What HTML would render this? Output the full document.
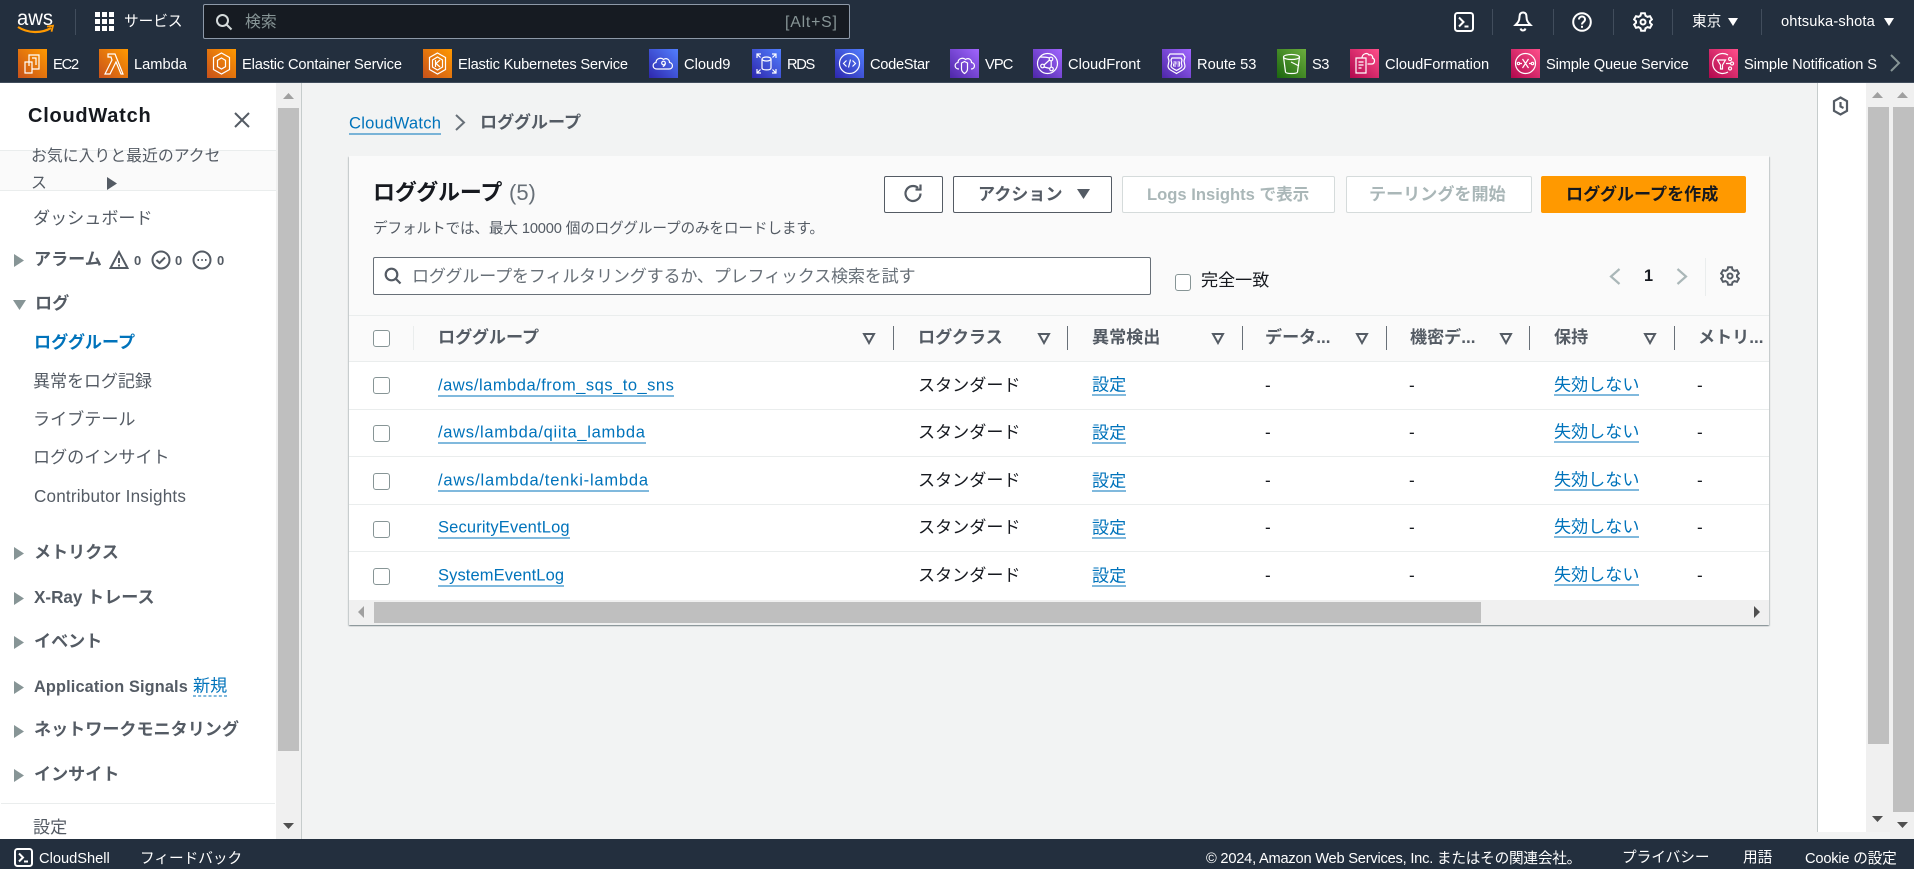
<!DOCTYPE html>
<html lang="ja"><head><meta charset="utf-8"><title>CloudWatch ロググループ</title>
<style>
html,body{margin:0;padding:0;width:1914px;height:869px;overflow:hidden;background:#f2f3f3}
body{position:relative;font-family:"Liberation Sans","Noto Sans CJK JP",sans-serif;color:#16191f;font-size:17.09px}
.a{position:absolute}
.t{position:absolute;white-space:nowrap;transform:translateY(calc(-50% + 1px));line-height:22px}
.w{color:#fff}
.n{font-size:14.65px;color:#fff}
.ic{position:absolute;top:49px;width:29px;height:29px}
.ic svg{display:block;width:29px;height:29px;fill:none;stroke:#fff;stroke-width:1.2}
.or{background:linear-gradient(45deg,#c8511b,#f90)}
.bl{background:linear-gradient(45deg,#2e27ad,#527fff)}
.pu{background:linear-gradient(45deg,#4d27a8,#a166ff)}
.gr{background:linear-gradient(45deg,#1b660f,#6cae3e)}
.pk{background:linear-gradient(45deg,#b0084d,#ff4f8b)}
.dv{position:absolute;width:1px;background:#414d5c}
.g{color:#545b64}
.b{font-weight:700}
.tr{position:absolute;background:#879596;width:10px;height:13px;clip-path:polygon(0 0,100% 50%,0 100%)}
.td{position:absolute;background:#879596;width:13px;height:10px;clip-path:polygon(0 0,100% 0,50% 100%)}
.up{position:absolute;background:#a0a0a0;width:11px;height:6px;clip-path:polygon(50% 0,100% 100%,0 100%)}
.dn{position:absolute;background:#505050;width:11px;height:6px;clip-path:polygon(0 0,100% 0,50% 100%)}
.thumb{position:absolute;background:#bfbfbf}
.btn{position:absolute;top:176px;height:37px;box-sizing:border-box;border:1px solid #545b64;border-radius:2px;background:#fff}
.dis{border-color:#d5dbdb}
.cb{position:absolute;left:373px;width:17px;height:17px;box-sizing:border-box;border:1.2px solid #879596;border-radius:3px;background:#fff}
.l{color:#0073bb;border-bottom:1px solid #0073bb;line-height:20px}
.j{padding-top:2px;line-height:18px}
.hl{position:absolute;left:349px;width:1420px;height:1px;background:#eaeded}
.vd{position:absolute;top:326px;height:24px;width:1px;background:#687078}
.s{position:absolute;top:332px;width:14px;height:13px;fill:none;stroke:#545b64;stroke-width:2}
.h{color:#545b64;font-weight:700;top:337px}
.ic2{position:absolute;fill:none;stroke:#fff;stroke-width:2}
</style></head><body>

<!-- top header -->
<div class="a" style="left:0;top:0;width:1914px;height:82px;background:#232f3e"></div>
<div class="a" style="left:0;top:82px;width:1914px;height:1px;background:#414d5c"></div>
<svg class="a" style="left:16px;top:8px" width="40" height="27" viewBox="0 0 40 27">
<text x="1" y="17" font-family="Liberation Sans" font-size="21" fill="#fff" textLength="36" lengthAdjust="spacingAndGlyphs">aws</text>
<path d="M2 19c10 6.500 24 6.500 33 1" fill="none" stroke="#f90" stroke-width="2.200"/><path d="M31 18.500l6-.8-1.500 6" fill="none" stroke="#f90" stroke-width="1.800"/></svg>
<div class="dv" style="left:75px;top:9px;height:26px"></div>
<svg class="a" style="left:95px;top:12px" width="20" height="20" viewBox="0 0 20 20" fill="#fff"><rect x="0" y="0" width="5" height="5"/><rect x="7" y="0" width="5" height="5"/><rect x="14" y="0" width="5" height="5"/><rect x="0" y="7" width="5" height="5"/><rect x="7" y="7" width="5" height="5"/><rect x="14" y="7" width="5" height="5"/><rect x="0" y="14" width="5" height="5"/><rect x="7" y="14" width="5" height="5"/><rect x="14" y="14" width="5" height="5"/></svg>
<span class="t n" style="left:124px;top:21px">サービス</span>
<div class="a" style="left:203px;top:4px;width:647px;height:35px;box-sizing:border-box;background:#161b22;border:1px solid #8d99a8;border-radius:2px"></div>
<svg class="a" style="left:215px;top:13px" width="18" height="18" viewBox="0 0 18 18" fill="none" stroke="#d5dbdb" stroke-width="2"><circle cx="7.500" cy="7.500" r="5.500"/><path d="M11.500 11.500L16.500 16.500"/></svg>
<span class="t" style="left:245px;top:22px;font-size:15.870px;color:#879596">検索</span>
<span class="t" style="left:785px;top:22px;font-size:15.870px;letter-spacing:.8px;color:#879596">[Alt+S]</span>

<svg class="ic2" style="left:1454px;top:12px" width="20" height="20" viewBox="0 0 20 20"><rect x="1" y="1" width="18" height="18" rx="2.500"/><path d="M5 5.500l4.500 4.500L5 14.500M10.500 14.500h4"/></svg>
<div class="dv" style="left:1492px;top:9px;height:26px"></div>
<svg class="ic2" style="left:1513px;top:11px" width="20" height="21" viewBox="0 0 20 21"><path d="M10 1.500c-2.500 0-3.500 2-3.500 4.500 0 4-2 6-4 8h15c-2-2-4-4-4-8 0-2.500-1-4.500-3.500-4.500zM7.500 17.500c.5 1.500 1.500 2 2.500 2s2-.5 2.500-2"/></svg>
<div class="dv" style="left:1553px;top:9px;height:26px"></div>
<svg class="ic2" style="left:1572px;top:12px" width="20" height="20" viewBox="0 0 20 20"><circle cx="10" cy="10" r="8.800"/><path d="M7 7.500c0-2 1.500-3 3-3s3 1 3 3c0 2.500-3 2.500-3 5"/><path d="M10 13.800v2" /></svg>
<div class="dv" style="left:1613px;top:9px;height:26px"></div>
<svg class="a" style="left:1633px;top:12px" width="20" height="20" viewBox="0 0 16 16" fill="none" stroke="#fff" stroke-width="1.600"><path d="M6.500 1h3l.5 2 1.600.9 2-.6 1.500 2.600-1.500 1.400v1.400l1.500 1.400-1.500 2.600-2-.6-1.600.9-.5 2h-3l-.5-2-1.600-.9-2 .6-1.500-2.600 1.500-1.400V7.300L.9 5.900l1.500-2.600 2 .6L6 3z"/><circle cx="8" cy="8" r="2"/></svg>
<div class="dv" style="left:1672px;top:9px;height:26px"></div>
<span class="t n" style="left:1692px;top:21px">東京</span>
<div class="a" style="left:1728px;top:18px;width:10px;height:8px;background:#fff;clip-path:polygon(0 0,100% 0,50% 100%)"></div>
<div class="dv" style="left:1761px;top:9px;height:26px"></div>
<span class="t n" style="left:1781px;top:21px;letter-spacing:.15px">ohtsuka-shota</span>
<div class="a" style="left:1884px;top:18px;width:10px;height:8px;background:#fff;clip-path:polygon(0 0,100% 0,50% 100%)"></div>

<!-- services bar -->
<div class="ic or" style="left:18px"><svg viewBox="0 0 29 29"><path d="M11 17V6h10v14h-7M7 13h7v11H7z"/><path d="M14 9h4v7"/></svg></div><span class="t n" style="left:53px;top:64px;letter-spacing:-1.2px">EC2</span>
<div class="ic or" style="left:99px"><svg viewBox="0 0 29 29"><path d="M6 25h5l6-12 5 12h2l-8-20H9v3h3l1 3L6 25z"/></svg></div><span class="t n" style="left:134px;top:64px">Lambda</span>
<div class="ic or" style="left:207px"><svg viewBox="0 0 29 29"><path d="M14.500 4l8 4.500v12l-8 4.500-8-4.500v-12z"/><path d="M14.500 9l4 2.300v6.400l-4 2.300-4-2.300v-6.400z"/></svg></div><span class="t n" style="left:242px;top:64px;letter-spacing:-.15px">Elastic Container Service</span>
<div class="ic or" style="left:423px"><svg viewBox="0 0 29 29"><path d="M14.500 4l8 4.500v12l-8 4.500-8-4.500v-12z"/><path d="M14.500 8l5 3v7l-5 3-5-3v-7zM12.500 11v7M17 11l-4 3.500 4 3.500"/></svg></div><span class="t n" style="left:458px;top:64px;letter-spacing:-.2px">Elastic Kubernetes Service</span>
<div class="ic bl" style="left:649px"><svg viewBox="0 0 29 29"><path d="M8 20c-5 0-5-6-1-6.500 0-4 5-5.500 7.500-3 3-2 6 0 6 3 4 .5 4 6.500-.5 6.500z"/><circle cx="14.500" cy="14" r="1.800"/><path d="M16.300 14c0 2-1 3-2.500 3.500"/></svg></div><span class="t n" style="left:684px;top:64px">Cloud9</span>
<div class="ic bl" style="left:752px"><svg viewBox="0 0 29 29"><ellipse cx="14.500" cy="10" rx="4.500" ry="2"/><path d="M10 10v9c0 2.500 9 2.500 9 0v-9M5 9V5h4M20 5h4v4M24 20v4h-4M9 24H5v-4M5 5l3.500 3.500M24 5l-3.500 3.500M24 24l-3.500-3.500M5 24l3.500-3.500"/></svg></div><span class="t n" style="left:787px;top:64px;letter-spacing:-1.3px">RDS</span>
<div class="ic bl" style="left:835px"><svg viewBox="0 0 29 29"><circle cx="14.500" cy="14.500" r="10"/><path d="M11.500 11.500l-3 3 3 3M17.500 11.500l3 3-3 3M15.500 10.500l-2 8"/></svg></div><span class="t n" style="left:870px;top:64px;letter-spacing:-.3px">CodeStar</span>
<div class="ic pu" style="left:950px"><svg viewBox="0 0 29 29"><path d="M9 20c-5 0-5-6-1-6.500 0-4 5-5.500 7.500-3 3-2 6 0 6 3 4 .5 4 6.500-.5 6.500"/><path d="M11.500 14l3-1.500 3 1.500v6c0 2-1.500 3.500-3 4.500-1.500-1-3-2.500-3-4.500z"/></svg></div><span class="t n" style="left:985px;top:64px;letter-spacing:-.9px">VPC</span>
<div class="ic pu" style="left:1033px"><svg viewBox="0 0 29 29"><circle cx="14.500" cy="14.500" r="10"/><circle cx="18" cy="10" r="1.800"/><circle cx="9.500" cy="17" r="1.800"/><circle cx="18.500" cy="20" r="1.800"/><path d="M16.500 11L11 16M11 18l6 1.500M18.200 12v6M7 8c4 0 7 0 9.500 1"/></svg></div><span class="t n" style="left:1068px;top:64px">CloudFront</span>
<div class="ic pu" style="left:1162px"><svg viewBox="0 0 29 29"><path d="M8 5h13l2 3-1 4 1 5c0 4-5 5-8.500 7.500C11 22 6 21 6 17l1-5-1-4z"/><path d="M10 9h9l1 2-.7 3 .7 3c0 2-3 3-5.500 4.500C12 20 9 19 9 17l.7-3-.7-3z"/><path d="M11.500 13h2.500v2h-2.500v2h2.500M15.500 13h2v4h-2M15.500 15h2" stroke-width=".9"/></svg></div><span class="t n" style="left:1197px;top:64px">Route 53</span>
<div class="ic gr" style="left:1277px"><svg viewBox="0 0 29 29"><ellipse cx="14.500" cy="8" rx="8" ry="2.500"/><path d="M6.500 8l2 15c.5 2 11.500 2 12 0l2-15M14 13l8 4"/></svg></div><span class="t n" style="left:1312px;top:64px;letter-spacing:-.5px">S3</span>
<div class="ic pk" style="left:1350px"><svg viewBox="0 0 29 29"><path d="M6 9h10v15H6zM8.500 13h5M8.500 16h5M8.500 19h3"/><path d="M12 9c0-4 5-6 7-3 3-1 4 2 3.500 3 3 1 2.500 6-1 6h-4"/></svg></div><span class="t n" style="left:1385px;top:64px">CloudFormation</span>
<div class="ic pk" style="left:1511px"><svg viewBox="0 0 29 29"><circle cx="14.500" cy="14.500" r="10"/><path d="M11.500 10l6 9M17.500 10l-6 9"/><circle cx="7.500" cy="14.500" r="1.200"/><circle cx="21.500" cy="14.500" r="1.200"/><path d="M9 14.500h2M18 14.500h2"/></svg></div><span class="t n" style="left:1546px;top:64px;letter-spacing:-.15px">Simple Queue Service</span>
<div class="ic pk" style="left:1709px"><svg viewBox="0 0 29 29"><path d="M19 6a10 10 0 1 0 0 17"/><path d="M8.500 11h8l-3 5v4h-2v-4zM21 8.500a1.500 1.500 0 1 0 .1 0M23 13a1.500 1.500 0 1 0 .1 0M21 18a1.500 1.500 0 1 0 .1 0M17 14.500h4.500"/></svg></div>
<div class="a" style="left:1744px;top:50px;width:133px;height:28px;overflow:hidden"><span class="t n" style="left:0;top:14px;letter-spacing:-.1px">Simple Notification Service</span></div>
<svg class="a" style="left:1889px;top:53px" width="12" height="20" viewBox="0 0 12 20" fill="none" stroke="#879596" stroke-width="2"><path d="M2 2l8 8-8 8"/></svg>

<!-- sidebar -->
<div class="a" style="left:0;top:83px;width:276px;height:756px;background:#fff"></div>
<div class="a" style="left:276px;top:83px;width:25px;height:756px;background:#f0f0f0"></div>
<div class="a" style="left:301px;top:83px;width:1px;height:756px;background:#c6cccc"></div>
<div class="thumb" style="left:278px;top:108px;width:21px;height:643px"></div>
<div class="up" style="left:283px;top:93px"></div><div class="dn" style="left:283px;top:823px"></div>
<span class="t b" style="left:28px;top:115px;font-size:20px;letter-spacing:.75px;color:#16191f">CloudWatch</span>
<svg class="a" style="left:234px;top:112px" width="16" height="16" viewBox="0 0 16 16" fill="none" stroke="#545b64" stroke-width="2"><path d="M1 1l14 14M15 1L1 15"/></svg>
<div class="a" style="left:0;top:150px;width:276px;height:39px;background:#fafafa;border-top:1px solid #eaeded;border-bottom:1px solid #eaeded"></div>
<span class="t g" style="left:31px;top:156px;font-size:15.870px">お気に入りと最近のアクセ</span>
<span class="t g" style="left:31px;top:183px;font-size:15.870px">ス</span>
<div class="tr" style="left:107px;top:177px;background:#545b64"></div>
<span class="t g" style="left:33px;top:218px">ダッシュボード</span>
<div class="tr" style="left:14px;top:254px"></div>
<span class="t g b" style="left:34px;top:259px">アラーム</span>
<svg class="a" style="left:109px;top:250px" width="20" height="20" viewBox="0 0 20 20" fill="none" stroke="#545b64" stroke-width="2"><path d="M10 2L1.500 18h17zM10 8v5M10 14.500v2"/></svg>
<span class="t g b" style="left:134px;top:260px;font-size:13px">0</span>
<svg class="a" style="left:151px;top:250px" width="20" height="20" viewBox="0 0 20 20" fill="none" stroke="#545b64" stroke-width="2"><circle cx="10" cy="10" r="8.500"/><path d="M5.500 10l3 3 5.500-5.500"/></svg>
<span class="t g b" style="left:175px;top:260px;font-size:13px">0</span>
<svg class="a" style="left:192px;top:250px" width="20" height="20" viewBox="0 0 20 20" fill="none" stroke="#545b64" stroke-width="2"><circle cx="10" cy="10" r="8.500"/><path d="M5.500 10h1.500M9.300 10h1.500M13 10h1.500"/></svg>
<span class="t g b" style="left:217px;top:260px;font-size:13px">0</span>
<div class="td" style="left:13px;top:300px"></div>
<span class="t g b" style="left:35px;top:303px">ログ</span>
<span class="t b" style="left:34px;top:342px;color:#0073bb">ロググループ</span>
<span class="t g" style="left:33px;top:381px;letter-spacing:-.1px">異常をログ記録</span>
<span class="t g" style="left:33px;top:419px">ライブテール</span>
<span class="t g" style="left:33px;top:457px">ログのインサイト</span>
<span class="t g" style="left:34px;top:496px;font-size:17.090px;letter-spacing:.2px">Contributor Insights</span>
<div class="tr" style="left:14px;top:547px"></div><span class="t g b" style="left:34px;top:552px">メトリクス</span>
<div class="tr" style="left:14px;top:592px"></div><span class="t g b" style="left:34px;top:597px">X-Ray トレース</span>
<div class="tr" style="left:14px;top:636px"></div><span class="t g b" style="left:34px;top:641px">イベント</span>
<div class="tr" style="left:14px;top:681px"></div><span class="t g b" style="left:34px;top:686px;font-size:16.300px;letter-spacing:.15px">Application Signals</span>
<span class="t" style="left:193px;top:685px;color:#0073bb;border-bottom:1px dashed #0073bb;line-height:18px;padding-top:2px">新規</span>
<div class="tr" style="left:14px;top:725px"></div><span class="t g b" style="left:34px;top:729px">ネットワークモニタリング</span>
<div class="tr" style="left:14px;top:769px"></div><span class="t g b" style="left:34px;top:774px">インサイト</span>
<div class="a" style="left:1px;top:803px;width:274px;height:1px;background:#eaeded"></div>
<span class="t g" style="left:33px;top:827px">設定</span>

<!-- breadcrumb -->
<span class="t" style="left:349px;top:123px;color:#0073bb;font-size:16.600px;letter-spacing:.25px;border-bottom:1px solid #0073bb;line-height:20px">CloudWatch</span>
<svg class="a" style="left:454px;top:113px" width="13" height="19" viewBox="0 0 13 19" fill="none" stroke="#687078" stroke-width="2"><path d="M2 2l8 7.500-8 7.500"/></svg>
<span class="t g b" style="left:480px;top:122px">ロググループ</span>

<!-- card -->
<div class="a" style="left:349px;top:156px;width:1420px;height:469px;background:#fff;box-shadow:0 1px 1px 0 rgba(0,28,36,.3),1px 1px 1px 0 rgba(0,28,36,.15),-1px 1px 1px 0 rgba(0,28,36,.15)"></div>
<div class="a" style="left:349px;top:156px;width:1420px;height:205px;background:#fafafa"></div>
<span class="t b" style="left:373px;top:192px;font-size:21.970px;letter-spacing:-.15px">ロググループ</span>
<span class="t g" style="left:509px;top:192px;font-size:21.970px;color:#687078">(5)</span>
<span class="t g" style="left:373px;top:228px;font-size:14.650px;letter-spacing:-.15px">デフォルトでは、最大 10000 個のロググループのみをロードします。</span>

<div class="btn" style="left:884px;width:59px"></div>
<svg class="a" style="left:903px;top:183px" width="21" height="21" viewBox="0 0 21 21" fill="none" stroke="#545b64" stroke-width="2.200"><path d="M17.500 10.500a7.500 7.500 0 1 1-2.500-5.600"/><path d="M17.500 1.500v5h-5"/></svg>
<div class="btn" style="left:953px;width:159px"></div>
<span class="t g b" style="left:978px;top:194px">アクション</span>
<div class="a" style="left:1077px;top:189px;width:13px;height:10px;background:#545b64;clip-path:polygon(0 0,100% 0,50% 100%)"></div>
<div class="btn dis" style="left:1122px;width:213px"></div>
<span class="t b" style="left:1147px;top:194px;color:#aab7b8;font-size:16.600px">Logs Insights で表示</span>
<div class="btn dis" style="left:1346px;width:186px"></div>
<span class="t b" style="left:1369px;top:194px;color:#aab7b8">テーリングを開始</span>
<div class="btn" style="left:1541px;width:205px;background:#f90;border-color:#f90"></div>
<span class="t b" style="left:1566px;top:194px;color:#16191f">ロググループを作成</span>

<div class="a" style="left:373px;top:257px;width:778px;height:38px;box-sizing:border-box;background:#fff;border:1.200px solid #687078;border-radius:2px"></div>
<svg class="a" style="left:384px;top:267px" width="18" height="18" viewBox="0 0 18 18" fill="none" stroke="#545b64" stroke-width="2.200"><circle cx="7.500" cy="7.500" r="5.800"/><path d="M11.500 11.500L16.500 16.500"/></svg>
<span class="t" style="left:412px;top:276px;color:#687078;letter-spacing:-.2px">ロググループをフィルタリングするか、プレフィックス検索を試す</span>
<div class="cb" style="left:1175px;top:274px;height:17px;width:16px"></div>
<span class="t" style="left:1201px;top:280px">完全一致</span>
<svg class="a" style="left:1608px;top:267px" width="14" height="19" viewBox="0 0 14 19" fill="none" stroke="#aab7b8" stroke-width="2.200"><path d="M11.500 2L3 9.500l8.500 7.500"/></svg>
<span class="t b" style="left:1644px;top:275px;font-size:16.300px">1</span>
<svg class="a" style="left:1675px;top:267px" width="14" height="19" viewBox="0 0 14 19" fill="none" stroke="#aab7b8" stroke-width="2.200"><path d="M2.500 2L11 9.500 2.500 17"/></svg>
<div class="a" style="left:1705px;top:258px;width:1px;height:38px;background:#eaeded"></div>
<svg class="a" style="left:1720px;top:266px" width="20" height="20" viewBox="0 0 16 16" fill="none" stroke="#545b64" stroke-width="1.600"><path d="M6.500 1h3l.5 2 1.600.9 2-.6 1.500 2.600-1.500 1.400v1.400l1.500 1.400-1.500 2.600-2-.6-1.600.9-.5 2h-3l-.5-2-1.600-.9-2 .6-1.500-2.600 1.500-1.400V7.300L.9 5.900l1.500-2.600 2 .6L6 3z"/><circle cx="8" cy="8" r="2"/></svg>

<!-- table -->
<div class="hl" style="top:315px"></div><div class="hl" style="top:361px"></div>
<div class="hl" style="top:409px"></div><div class="hl" style="top:456px"></div><div class="hl" style="top:504px"></div><div class="hl" style="top:551px"></div>
<div class="cb" style="top:330px"></div>
<div class="a" style="left:413px;top:326px;width:1px;height:24px;background:#eaeded"></div>
<span class="t h" style="left:438px">ロググループ</span>
<svg class="s" style="left:862px" viewBox="0 0 14 13"><path d="M2 2h10L7 11z"/></svg><div class="vd" style="left:893px"></div>
<span class="t h" style="left:918px">ログクラス</span>
<svg class="s" style="left:1037px" viewBox="0 0 14 13"><path d="M2 2h10L7 11z"/></svg><div class="vd" style="left:1067px"></div>
<span class="t h" style="left:1092px">異常検出</span>
<svg class="s" style="left:1211px" viewBox="0 0 14 13"><path d="M2 2h10L7 11z"/></svg><div class="vd" style="left:1242px"></div>
<span class="t h" style="left:1265px">データ...</span>
<svg class="s" style="left:1355px" viewBox="0 0 14 13"><path d="M2 2h10L7 11z"/></svg><div class="vd" style="left:1386px"></div>
<span class="t h" style="left:1410px">機密デ...</span>
<svg class="s" style="left:1499px" viewBox="0 0 14 13"><path d="M2 2h10L7 11z"/></svg><div class="vd" style="left:1529px"></div>
<span class="t h" style="left:1554px">保持</span>
<svg class="s" style="left:1643px" viewBox="0 0 14 13"><path d="M2 2h10L7 11z"/></svg><div class="vd" style="left:1674px"></div>
<span class="t h" style="left:1698px">メトリ...</span>

<div class="cb" style="top:377px"></div>
<span class="t l" style="left:438px;top:385px;font-size:16.500px;letter-spacing:.5px">/aws/lambda/from_sqs_to_sns</span>
<span class="t" style="left:918px;top:385px">スタンダード</span><span class="t l j" style="left:1092px;top:384px">設定</span><span class="t" style="left:1265px;top:385px">-</span><span class="t" style="left:1409px;top:385px">-</span><span class="t l j" style="left:1554px;top:384px">失効しない</span><span class="t" style="left:1697px;top:385px">-</span>
<div class="cb" style="top:425px"></div>
<span class="t l" style="left:438px;top:432px;font-size:16.500px;letter-spacing:.7px">/aws/lambda/qiita_lambda</span>
<span class="t" style="left:918px;top:432px">スタンダード</span><span class="t l j" style="left:1092px;top:432px">設定</span><span class="t" style="left:1265px;top:432px">-</span><span class="t" style="left:1409px;top:432px">-</span><span class="t l j" style="left:1554px;top:431px">失効しない</span><span class="t" style="left:1697px;top:432px">-</span>
<div class="cb" style="top:473px"></div>
<span class="t l" style="left:438px;top:480px;font-size:16.500px;letter-spacing:.8px">/aws/lambda/tenki-lambda</span>
<span class="t" style="left:918px;top:480px">スタンダード</span><span class="t l j" style="left:1092px;top:480px">設定</span><span class="t" style="left:1265px;top:480px">-</span><span class="t" style="left:1409px;top:480px">-</span><span class="t l j" style="left:1554px;top:479px">失効しない</span><span class="t" style="left:1697px;top:480px">-</span>
<div class="cb" style="top:521px"></div>
<span class="t l" style="left:438px;top:527px;font-size:16.500px;letter-spacing:.15px">SecurityEventLog</span>
<span class="t" style="left:918px;top:527px">スタンダード</span><span class="t l j" style="left:1092px;top:527px">設定</span><span class="t" style="left:1265px;top:527px">-</span><span class="t" style="left:1409px;top:527px">-</span><span class="t l j" style="left:1554px;top:526px">失効しない</span><span class="t" style="left:1697px;top:527px">-</span>
<div class="cb" style="top:568px"></div>
<span class="t l" style="left:438px;top:575px;font-size:16.500px;letter-spacing:.1px">SystemEventLog</span>
<span class="t" style="left:918px;top:575px">スタンダード</span><span class="t l j" style="left:1092px;top:575px">設定</span><span class="t" style="left:1265px;top:575px">-</span><span class="t" style="left:1409px;top:575px">-</span><span class="t l j" style="left:1554px;top:574px">失効しない</span><span class="t" style="left:1697px;top:575px">-</span>

<div class="a" style="left:349px;top:600px;width:1420px;height:25px;background:#f0f0f0"></div>
<div class="thumb" style="left:374px;top:602px;width:1107px;height:21px"></div>
<div class="a" style="left:358px;top:606px;width:6px;height:12px;background:#a0a0a0;clip-path:polygon(100% 0,100% 100%,0 50%)"></div>
<div class="a" style="left:1754px;top:606px;width:6px;height:12px;background:#505050;clip-path:polygon(0 0,100% 50%,0 100%)"></div>

<!-- right panel -->
<div class="a" style="left:1817px;top:83px;width:49px;height:749px;background:#fff;border-left:1px solid #c6cccc;box-sizing:border-box"></div>
<svg class="a" style="left:1832px;top:96px" width="17" height="20" viewBox="0 0 17 20" fill="none" stroke="#545b64" stroke-width="2.200"><path d="M8.500 1.500l6.500 3.700v9.600L8.500 18.500 2 14.800V5.200z"/><path d="M8.500 6v4.500l3 1.500"/></svg>
<div class="a" style="left:1866px;top:83px;width:24px;height:749px;background:#f0f0f0"></div>
<div class="a" style="left:1890px;top:83px;width:24px;height:756px;background:#f0f0f0"></div>
<div class="thumb" style="left:1868px;top:107px;width:21px;height:637px"></div>
<div class="thumb" style="left:1893px;top:107px;width:21px;height:705px"></div>
<div class="up" style="left:1872px;top:92px"></div><div class="up" style="left:1897px;top:92px"></div>
<div class="dn" style="left:1872px;top:816px"></div><div class="dn" style="left:1897px;top:822px"></div>

<!-- footer -->
<div class="a" style="left:0;top:839px;width:1914px;height:30px;background:#232f3e"></div>
<svg class="a" style="left:14px;top:848px" width="20" height="20" viewBox="0 0 20 20" fill="none" stroke="#fff" stroke-width="2"><rect x="1" y="1" width="17" height="17" rx="2.500"/><path d="M5 5.500l4 4-4 4M10 13.500h4"/></svg>
<span class="t n" style="left:39px;top:858px">CloudShell</span>
<span class="t n" style="left:140px;top:858px">フィードバック</span>
<span class="t n" style="left:1206px;top:858px;letter-spacing:-.22px">© 2024, Amazon Web Services, Inc. またはその関連会社。</span>
<span class="t n" style="left:1622px;top:857px">プライバシー</span>
<span class="t n" style="left:1743px;top:857px">用語</span>
<span class="t n" style="left:1805px;top:858px;letter-spacing:-.2px">Cookie の設定</span>
</body></html>
